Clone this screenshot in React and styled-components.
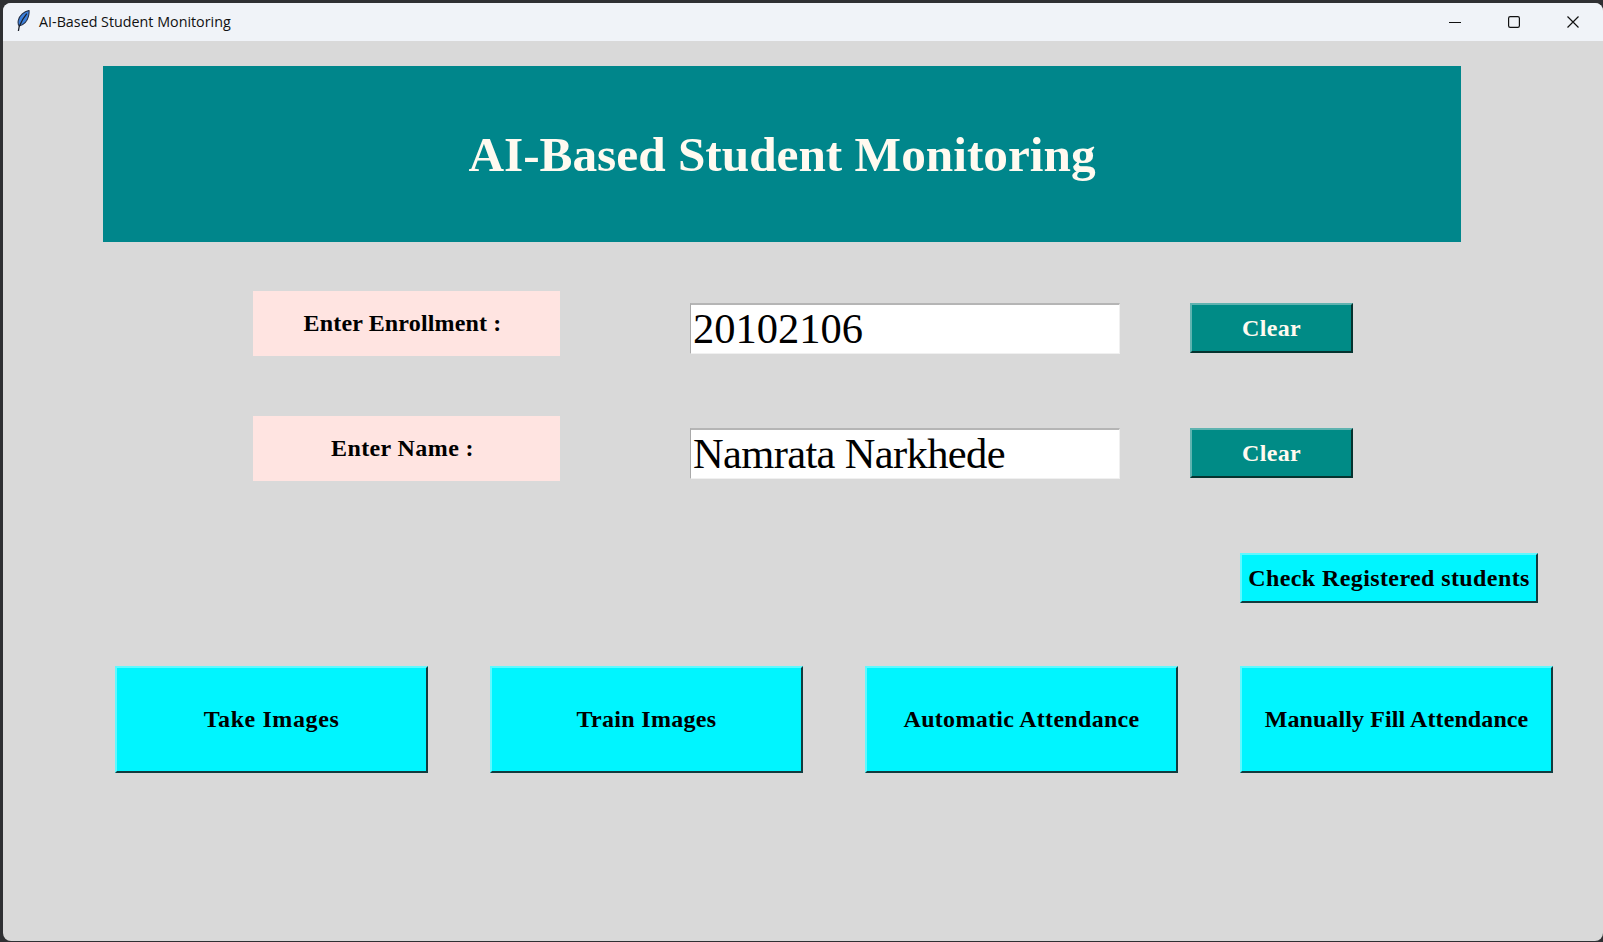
import React from 'react'
import styled, { createGlobalStyle } from 'styled-components'

const GlobalStyle = createGlobalStyle`
  html, body {
    margin: 0;
    height: 942px;
    overflow: hidden;
    background: #2f3033;
  }
`

function App() {
  return (
    <>
      <GlobalStyle />
      <Desktop>
        <Window>
          <TitleBar>
            <Feather viewBox="0 0 14 22" aria-hidden="true">
              <path d="M13 0.5C8 1.5 3.6 5.4 2.4 10.2 1.8 12.8 2.2 14.8 3.2 16 7.8 14.8 11.2 11 12.4 6.6 13 4.4 13.3 2.4 13 0.5Z" fill="#3b7fdc" stroke="#26324a" strokeWidth="1.1" />
              <path d="M10.8 3.6C8 7 5 12 3.2 16.4L2.4 21" fill="none" stroke="#1c2029" strokeWidth="1.3" />
            </Feather>
            <TitleText>AI-Based Student Monitoring</TitleText>
            <WindowControls>
              <ControlIcon viewBox="0 0 12 12"><path d="M0 6.5h12" /></ControlIcon>
              <ControlIcon viewBox="0 0 12 12"><rect x="0.6" y="0.6" width="10.8" height="10.8" rx="1.6" /></ControlIcon>
              <ControlIcon viewBox="0 0 12 12"><path d="M0.5 0.5l11 11M11.5 0.5l-11 11" /></ControlIcon>
            </WindowControls>
          </TitleBar>
          <Content>
            <Banner>AI-Based Student Monitoring</Banner>
            <FormRow>
              <FieldLabel $tracking={0.15}>Enter Enrollment :</FieldLabel>
              <TextField defaultValue="20102106" />
              <ClearButton>Clear</ClearButton>
            </FormRow>
            <FormRow>
              <FieldLabel $tracking={0.4}>Enter Name :</FieldLabel>
              <TextField $tracking={-0.64} defaultValue="Namrata Narkhede" />
              <ClearButton>Clear</ClearButton>
            </FormRow>
            <Actions>
              <CheckButton $tracking={0.4}>Check Registered students</CheckButton>
              <ActionButton $tracking={0.6}>Take Images</ActionButton>
              <ActionButton>Train Images</ActionButton>
              <ActionButton>Automatic Attendance</ActionButton>
              <ActionButton $tracking={0.1}>Manually Fill Attendance</ActionButton>
            </Actions>
          </Content>
        </Window>
      </Desktop>
    </>
  )
}

const Desktop = styled.div`
  height: 942px;
  padding: 3px 0 1px 3px;
  box-sizing: border-box;
`
const Window = styled.div`
  height: 100%;
  background: #d9d9d9;
  border-radius: 8px;
  overflow: hidden;
  display: flex;
  flex-direction: column;
`
const TitleBar = styled.div`
  height: 38px;
  flex: none;
  display: flex;
  align-items: center;
  padding-left: 13px;
  background: #f0f3f8;
`
const Feather = styled.svg`
  width: 14px;
  height: 22px;
  margin-top: -3px;
`
const TitleText = styled.span`
  margin-left: 9px;
  margin-top: -2px;
  font: 14.3px "Open Sans", sans-serif;
  color: #111;
`
const WindowControls = styled.div`
  margin-left: auto;
  margin-right: 24px;
  display: flex;
  gap: 47px;
`
const ControlIcon = styled.svg`
  display: block;
  width: 12px;
  height: 12px;
  fill: none;
  stroke: #111;
  stroke-width: 1.2;
`
const Content = styled.div`
  flex: 1;
  padding: 25px 0 0 100px;
  font-family: "Liberation Serif", "Times New Roman", serif;
`
const Banner = styled.div`
  width: 1358px;
  height: 176px;
  display: flex;
  align-items: center;
  justify-content: center;
  background: #00868b;
  color: #fffaf0;
  font-size: 49.3px;
  font-weight: bold;
`
const FormRow = styled.div`
  display: flex;
  align-items: flex-start;
  margin: 49px 0 60px 150px;
  & + & {
    margin-top: 0;
  }
`
const FieldLabel = styled.div`
  width: 307px;
  height: 65px;
  padding-right: 8px;
  box-sizing: border-box;
  display: flex;
  align-items: center;
  justify-content: center;
  background: #ffe4e1;
  color: #000;
  font-size: 24px;
  font-weight: bold;
  letter-spacing: ${(props) => props.$tracking || 0}px;
`
const TextField = styled.input`
  width: 430px;
  height: 51px;
  margin: 12px 0 0 130px;
  padding: 0 0 2px 2px;
  box-sizing: border-box;
  border-style: solid;
  border-width: 2px 1px 1px 1px;
  border-color: #b5b5b5 #f0f0f0 #f0f0f0 #a9a9a9;
  outline: none;
  background: #fff;
  color: #000;
  font: 42.5px "Liberation Serif", "Times New Roman", serif;
  letter-spacing: ${(props) => props.$tracking || 0}px;
`
const RaisedButton = styled.button`
  box-sizing: border-box;
  margin: 0;
  padding: 0;
  border: 2px solid;
  font-family: inherit;
  font-weight: bold;
  font-size: 24px;
  letter-spacing: ${(props) => props.$tracking ?? 0.3}px;
`
const ClearButton = styled(RaisedButton)`
  width: 163px;
  height: 50px;
  margin: 12px 0 0 70px;
  background: #008b86;
  color: #fffaf0;
  border-color: #5fb3b0 #06332f #06332f #5fb3b0;
`
const Actions = styled.div`
  display: grid;
  grid-template-columns: repeat(4, 313px);
  column-gap: 62px;
  row-gap: 63px;
  margin: -61px 0 0 12px;
  padding-top: 73px;
`
const CheckButton = styled(RaisedButton)`
  grid-column: 4;
  width: 298px;
  height: 50px;
  background: #00f5ff;
  color: #000;
  border-color: #5ff9ff #123c3f #123c3f #5ff9ff;
`
const ActionButton = styled(CheckButton)`
  grid-column: auto;
  width: 313px;
  height: 107px;
`

export default App
